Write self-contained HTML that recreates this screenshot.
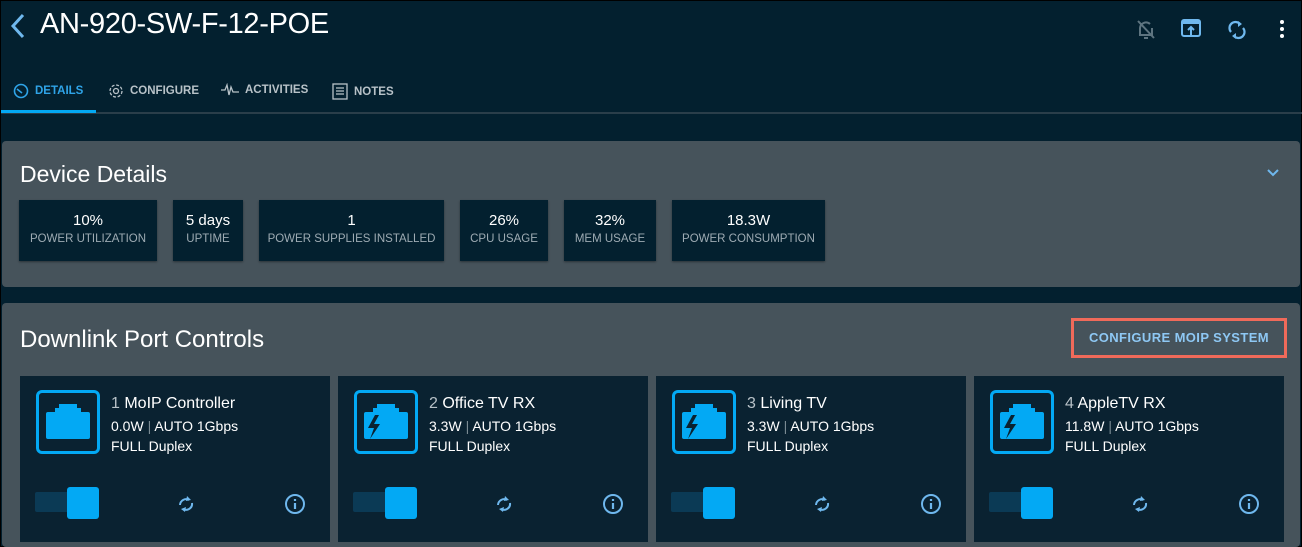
<!DOCTYPE html>
<html style="overflow:hidden;height:547px"><head><style>
*{box-sizing:border-box;margin:0;padding:0}
body{width:1302px;height:547px;overflow:hidden;background:#03202f;font-family:"Liberation Sans",sans-serif;position:relative;border:1px solid #000}
.abs{position:absolute}
.title{left:39px;top:7px;font-size:29px;color:#fff;letter-spacing:-0.3px}
.tab{top:82px;font-size:11.5px;font-weight:bold;color:#b8c2c8;display:flex;align-items:center;gap:6px}
.panel{background:#46535b;border-radius:4px;left:1px;width:1298px}
.ph{font-size:23px;color:#fff}
.tile{position:absolute;top:199px;height:61px;background:#03202f;text-align:center;box-shadow:0 1px 2px rgba(0,0,0,.4)}
.tile .v{font-size:15px;color:#fff;margin-top:12px}
.tile .l{font-size:11.5px;color:#9eabb3;margin-top:4px}
.card{position:absolute;top:375px;width:310px;height:166px;background:#0a2231}
.card .ic{position:absolute;left:16px;top:14px;width:64px;height:64px;border:3px solid #03a9f4;border-radius:6px}
.card .t{position:absolute;left:91px;top:19px;font-size:16px;color:#fff}
.card .t span{color:#b8c2c8}
.card .s{position:absolute;left:91px;font-size:14px;color:#fff}
.tg{position:absolute;left:15px;top:111px;width:64px;height:29px}
.tg .tr{position:absolute;left:0;top:5px;width:40px;height:20px;background:#0b3a55;border-radius:2px}
.tg .k{position:absolute;left:32px;top:0;width:32px;height:32px;background:#03a9f4;border-radius:3px}
</style></head><body>
<svg class="abs" style="left:7px;top:11px" width="20" height="28" viewBox="0 0 20 28"><path d="M15 3 L5 14 L15 25" stroke="#6fb8ee" stroke-width="3" fill="none"/></svg>
<div class="abs title">AN-920-SW-F-12-POE</div>
<svg class="abs" style="left:1135px;top:18px" width="20" height="22" viewBox="0 0 20 22"><path d="M4 16V9a6 6 0 0 1 10-4M16 9v7H3M2 2l16 17M8 19h4" stroke="#5e7480" stroke-width="2" fill="none"/></svg>
<svg class="abs" style="left:1180px;top:18px" width="20" height="19" viewBox="0 0 20 19"><rect x="1" y="1" width="18" height="16" rx="2" stroke="#6fb8ee" stroke-width="2" fill="none"/><rect x="1" y="1" width="18" height="4" fill="#6fb8ee"/><path d="M10 16V9M7 11l3-3 3 3" stroke="#6fb8ee" stroke-width="2" fill="none"/></svg>
<svg class="abs" style="left:1226px;top:17px" width="20" height="24" viewBox="0 0 20 24"><path d="M4 14a6 6 0 0 1 9-8M16 10a6 6 0 0 1-9 8" stroke="#6fb8ee" stroke-width="2.2" fill="none"/><path d="M11 3l4 3-4 3zM9 21l-4-3 4-3z" fill="#6fb8ee"/></svg>
<div class="abs" style="left:1279px;top:19px;width:4px"><div style="width:4px;height:4px;background:#fff;border-radius:2px;margin-bottom:3px"></div><div style="width:4px;height:4px;background:#fff;border-radius:2px;margin-bottom:3px"></div><div style="width:4px;height:4px;background:#fff;border-radius:2px"></div></div>
<div class="abs tab" style="left:12px;color:#2fa4e8"><svg width="16" height="16" viewBox="0 0 16 16"><circle cx="8" cy="8" r="6.5" stroke="#2fa4e8" stroke-width="1.6" fill="none"/><path d="M4 6l5 4" stroke="#2fa4e8" stroke-width="1.6"/></svg>DETAILS</div>
<div class="abs tab" style="left:107px"><svg width="16" height="16" viewBox="0 0 16 16"><circle cx="8" cy="8" r="2.5" stroke="#b8c2c8" stroke-width="1.3" fill="none"/><circle cx="8" cy="8" r="6" stroke="#b8c2c8" stroke-width="1.3" fill="none" stroke-dasharray="3 1.7"/></svg>CONFIGURE</div>
<div class="abs tab" style="left:220px"><svg width="18" height="14" viewBox="0 0 18 14"><path d="M0 7h4l2-5 2 10 2-8 2 5h6" stroke="#b8c2c8" stroke-width="1.3" fill="none"/></svg>ACTIVITIES</div>
<div class="abs tab" style="left:331px"><svg width="16" height="17" viewBox="0 0 16 17"><rect x="1" y="1" width="14" height="15" stroke="#b8c2c8" stroke-width="1.3" fill="none"/><path d="M4 5h8M4 8h8M4 11h8" stroke="#b8c2c8" stroke-width="1.3"/></svg>NOTES</div>
<div class="abs" style="left:0;top:111px;width:1302px;height:2px;background:#2a3e4a"></div>
<div class="abs" style="left:0;top:109px;width:95px;height:3px;background:#03a9f4"></div>
<div class="abs panel" style="top:140px;height:146px"></div>
<div class="abs ph" style="left:19px;top:160px">Device Details</div>
<svg class="abs" style="left:1265px;top:167px" width="14" height="10" viewBox="0 0 14 10"><path d="M2 2l5 5 5-5" stroke="#6fb8ee" stroke-width="2" fill="none"/></svg>
<div class="tile" style="left:18px;width:138px"><div class="v">10%</div><div class="l">POWER UTILIZATION</div></div>
<div class="tile" style="left:172px;width:70px"><div class="v">5 days</div><div class="l">UPTIME</div></div>
<div class="tile" style="left:258px;width:185px"><div class="v">1</div><div class="l">POWER SUPPLIES INSTALLED</div></div>
<div class="tile" style="left:459px;width:88px"><div class="v">26%</div><div class="l">CPU USAGE</div></div>
<div class="tile" style="left:563px;width:92px"><div class="v">32%</div><div class="l">MEM USAGE</div></div>
<div class="tile" style="left:671px;width:153px"><div class="v">18.3W</div><div class="l">POWER CONSUMPTION</div></div>
<div class="abs panel" style="top:302px;height:244px"></div>
<div class="abs ph" style="left:19px;top:325px;font-size:24px">Downlink Port Controls</div>
<div class="abs" style="left:1070px;top:317px;width:216px;height:40px;border:3px solid #f06a5a;color:#8ec8f4;font-size:13px;font-weight:bold;letter-spacing:.4px;text-align:center;line-height:34px">CONFIGURE MOIP SYSTEM</div>

<div class="card" style="left:19px">
<div class="ic"><svg width="58" height="58" viewBox="0 0 58 58"><path d="M20 11h18v4h4v4h7a2 2 0 0 1 2 2v23a2 2 0 0 1-2 2H9a2 2 0 0 1-2-2V21a2 2 0 0 1 2-2h7v-4h4z" fill="#03a9f4"/></svg></div>
<div class="t"><span>1</span> MoIP Controller</div><div class="s" style="top:42px">0.0W <span style="color:#7a8a93">|</span> AUTO 1Gbps</div><div class="s" style="top:62px">FULL Duplex</div>
<div class="tg"><div class="tr"></div><div class="k"></div></div>
<svg style="position:absolute;left:157px;top:118px" width="18" height="20" viewBox="0 0 18 20"><path d="M3 11a6 6 0 0 1 9-5M15 9a6 6 0 0 1-9 6" stroke="#6fb8ee" stroke-width="2" fill="none"/><path d="M10 2l4 4-5 1zM8 18l-4-3 5-2z" fill="#6fb8ee"/></svg>
<svg style="position:absolute;left:264px;top:117px" width="22" height="22" viewBox="0 0 22 22"><circle cx="11" cy="11" r="9" stroke="#6fb8ee" stroke-width="2" fill="none"/><path d="M11 10v6M11 6v2" stroke="#6fb8ee" stroke-width="2.2"/></svg>
</div>

<div class="card" style="left:337px">
<div class="ic"><svg width="58" height="58" viewBox="0 0 58 58"><path d="M20 11h18v4h4v4h7a2 2 0 0 1 2 2v23a2 2 0 0 1-2 2H9a2 2 0 0 1-2-2V21a2 2 0 0 1 2-2h7v-4h4z" fill="#03a9f4"/><path d="M18 22l-7 13h6l-4 11 10-15h-6l5-9z" fill="#0a2231"/></svg></div>
<div class="t"><span>2</span> Office TV RX</div><div class="s" style="top:42px">3.3W <span style="color:#7a8a93">|</span> AUTO 1Gbps</div><div class="s" style="top:62px">FULL Duplex</div>
<div class="tg"><div class="tr"></div><div class="k"></div></div>
<svg style="position:absolute;left:157px;top:118px" width="18" height="20" viewBox="0 0 18 20"><path d="M3 11a6 6 0 0 1 9-5M15 9a6 6 0 0 1-9 6" stroke="#6fb8ee" stroke-width="2" fill="none"/><path d="M10 2l4 4-5 1zM8 18l-4-3 5-2z" fill="#6fb8ee"/></svg>
<svg style="position:absolute;left:264px;top:117px" width="22" height="22" viewBox="0 0 22 22"><circle cx="11" cy="11" r="9" stroke="#6fb8ee" stroke-width="2" fill="none"/><path d="M11 10v6M11 6v2" stroke="#6fb8ee" stroke-width="2.2"/></svg>
</div>

<div class="card" style="left:655px">
<div class="ic"><svg width="58" height="58" viewBox="0 0 58 58"><path d="M20 11h18v4h4v4h7a2 2 0 0 1 2 2v23a2 2 0 0 1-2 2H9a2 2 0 0 1-2-2V21a2 2 0 0 1 2-2h7v-4h4z" fill="#03a9f4"/><path d="M18 22l-7 13h6l-4 11 10-15h-6l5-9z" fill="#0a2231"/></svg></div>
<div class="t"><span>3</span> Living TV</div><div class="s" style="top:42px">3.3W <span style="color:#7a8a93">|</span> AUTO 1Gbps</div><div class="s" style="top:62px">FULL Duplex</div>
<div class="tg"><div class="tr"></div><div class="k"></div></div>
<svg style="position:absolute;left:157px;top:118px" width="18" height="20" viewBox="0 0 18 20"><path d="M3 11a6 6 0 0 1 9-5M15 9a6 6 0 0 1-9 6" stroke="#6fb8ee" stroke-width="2" fill="none"/><path d="M10 2l4 4-5 1zM8 18l-4-3 5-2z" fill="#6fb8ee"/></svg>
<svg style="position:absolute;left:264px;top:117px" width="22" height="22" viewBox="0 0 22 22"><circle cx="11" cy="11" r="9" stroke="#6fb8ee" stroke-width="2" fill="none"/><path d="M11 10v6M11 6v2" stroke="#6fb8ee" stroke-width="2.2"/></svg>
</div>

<div class="card" style="left:973px">
<div class="ic"><svg width="58" height="58" viewBox="0 0 58 58"><path d="M20 11h18v4h4v4h7a2 2 0 0 1 2 2v23a2 2 0 0 1-2 2H9a2 2 0 0 1-2-2V21a2 2 0 0 1 2-2h7v-4h4z" fill="#03a9f4"/><path d="M18 22l-7 13h6l-4 11 10-15h-6l5-9z" fill="#0a2231"/></svg></div>
<div class="t"><span>4</span> AppleTV RX</div><div class="s" style="top:42px">11.8W <span style="color:#7a8a93">|</span> AUTO 1Gbps</div><div class="s" style="top:62px">FULL Duplex</div>
<div class="tg"><div class="tr"></div><div class="k"></div></div>
<svg style="position:absolute;left:157px;top:118px" width="18" height="20" viewBox="0 0 18 20"><path d="M3 11a6 6 0 0 1 9-5M15 9a6 6 0 0 1-9 6" stroke="#6fb8ee" stroke-width="2" fill="none"/><path d="M10 2l4 4-5 1zM8 18l-4-3 5-2z" fill="#6fb8ee"/></svg>
<svg style="position:absolute;left:264px;top:117px" width="22" height="22" viewBox="0 0 22 22"><circle cx="11" cy="11" r="9" stroke="#6fb8ee" stroke-width="2" fill="none"/><path d="M11 10v6M11 6v2" stroke="#6fb8ee" stroke-width="2.2"/></svg>
</div>
</body></html>
